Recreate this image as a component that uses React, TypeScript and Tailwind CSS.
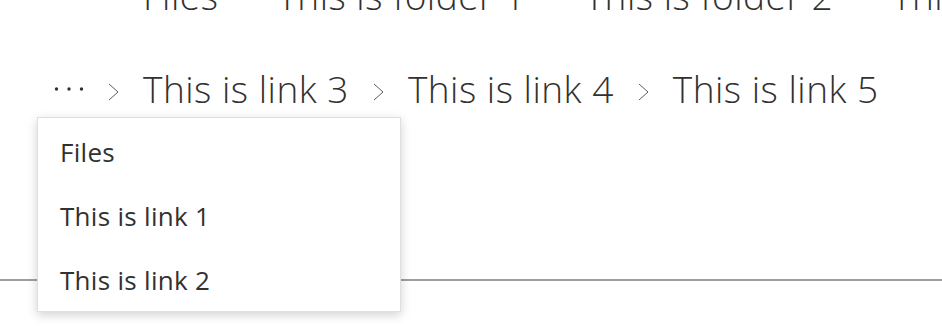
import { Fragment } from "react";

const font = { fontFamily: '"Open Sans", "Noto Sans", sans-serif' };

function Chevron({ hidden = false }: { hidden?: boolean }) {
    return (
        <svg width="11" height="18" viewBox="0 0 11 18" className={`shrink-0 mt-[5px] ${hidden ? "invisible" : ""}`}>
            <polyline points="1,1 10,9 1,17" fill="none" stroke="#605e5c" strokeWidth="1" />
        </svg>
    );
}

function Dots({ hidden = false }: { hidden?: boolean }) {
    return (
        <svg width="30" height="6" viewBox="0 0 30 6" className={`shrink-0 ${hidden ? "invisible" : ""}`}>
            <circle cx="2.5" cy="3" r="1.7" fill="#323130" />
            <circle cx="15" cy="3" r="1.7" fill="#323130" />
            <circle cx="27.5" cy="3" r="1.7" fill="#323130" />
        </svg>
    );
}

const topItems = ["Files", "This is folder 1", "This is folder 2", "This is folder 3"];
const rowItems = ["This is link 3", "This is link 4", "This is link 5"];
const menuItems = ["Files", "This is link 1", "This is link 2"];

export default function App() {
    return (
        <div className="relative w-[942px] h-[334px] overflow-hidden bg-white text-[#323130]" style={font}>
            {/* first breadcrumb, scrolled mostly out of view */}
            <div className="mt-[-24px] h-[40px] flex items-center gap-6 pl-[54px] whitespace-nowrap text-[37px] leading-[40px] tracking-[0.5px] font-light">
                <Dots hidden />
                <Chevron hidden />
                {topItems.map((item, i) => (
                    <Fragment key={item}>
                        {i > 0 && <Chevron hidden />}
                        <span className="shrink-0">{item}</span>
                    </Fragment>
                ))}
            </div>

            {/* second breadcrumb with overflow */}
            <div className="mt-[53px] h-[40px] flex items-center gap-6 pl-[54px] whitespace-nowrap text-[37px] leading-[40px] tracking-[0.5px] font-light">
                <Dots />
                {rowItems.map((item) => (
                    <Fragment key={item}>
                        <Chevron />
                        <span className="shrink-0">{item}</span>
                    </Fragment>
                ))}
            </div>

            <div className="mt-[170px] h-[2px] bg-[#a19f9d]" />

            {/* overflow menu */}
            <ul className="absolute left-[37px] top-[117px] w-[364px] h-[195px] bg-white border border-[#e1dfdd] shadow-[0_3px_10px_rgba(0,0,0,0.18)] pt-[1px]">
                {menuItems.map((item) => (
                    <li key={item} className="h-[64px] flex items-center pl-[22px] pt-[3px] text-[26px] tracking-[0.3px] text-[#323130]">
                        {item}
                    </li>
                ))}
            </ul>
        </div>
    );
}
